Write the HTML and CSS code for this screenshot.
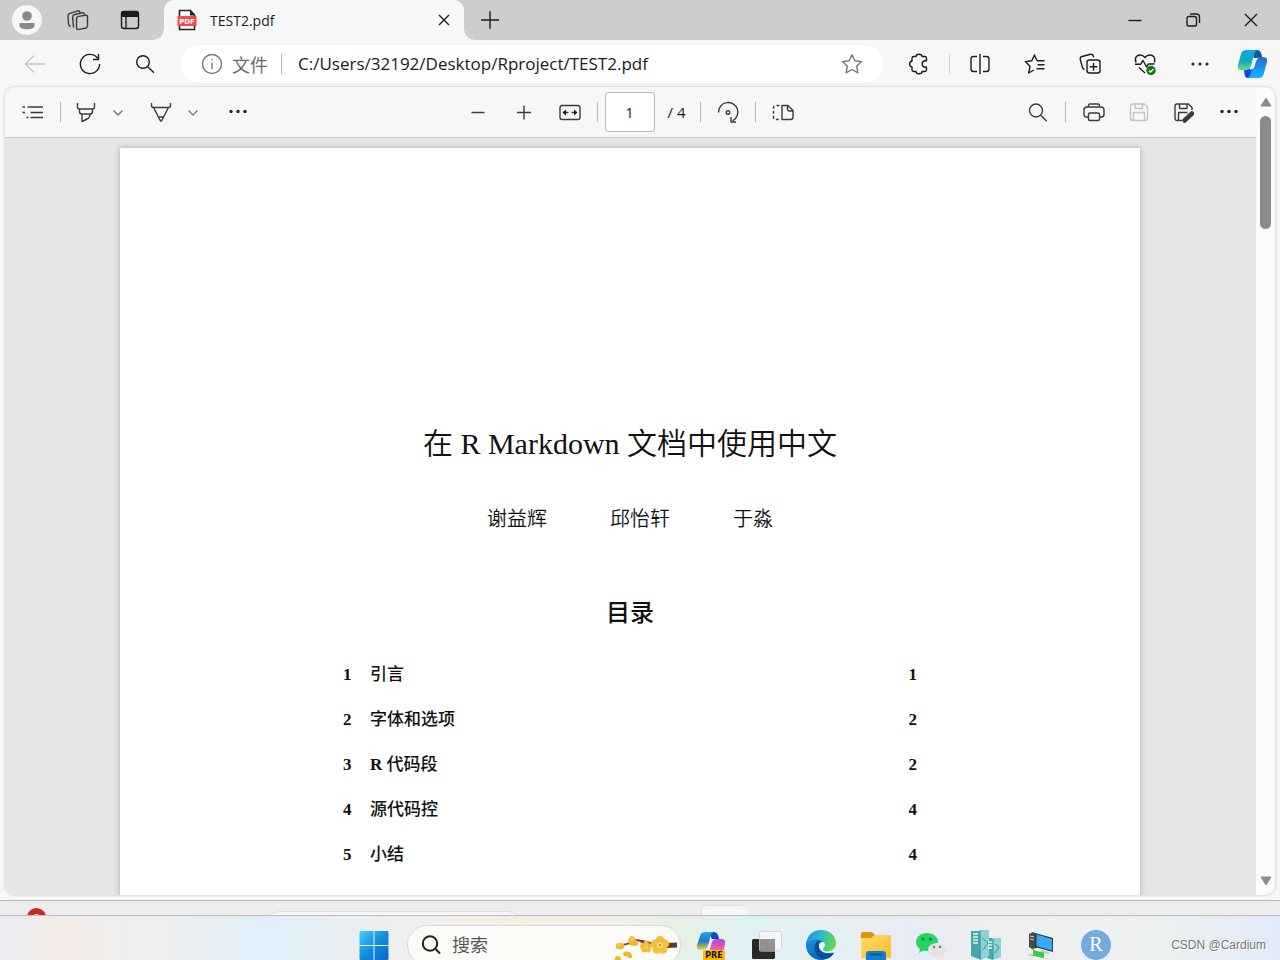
FILE: index.html
```html
<!DOCTYPE html>
<html lang="zh-CN">
<head>
<meta charset="utf-8">
<meta name="viewport" content="width=device-width, initial-scale=1">
<title>TEST2.pdf</title>
<link rel="stylesheet" href="styles.css">
</head>
<body>
<div class="browser">
  <header class="tabbar">
    <button class="avatar" aria-label="个人资料"><svg viewBox="0 0 30 30"><circle cx="15" cy="15" r="15" fill="#f7f7f7"/><circle cx="15" cy="11" r="4.8" fill="#898989"/><path d="M7.5 18h15v2.200c0 2.600-3.200 4-7.500 4s-7.500-1.400-7.500-4z" fill="#898989"/></svg></button>
    <button class="btn tab-tool" aria-label="工作区"><svg class="ico" viewBox="0 0 24 24"><rect x="10.500" y="8" width="11" height="13" rx="2.200" transform="skewY(-10) translate(0 2.600)"/><path d="M7.500 19.500 6.600 9.400q0-2.400 2-2.900l7.600-1.700q2-.3 2.300 1.700M4.500 18.500Q2.600 17.600 2.400 15L2 8.200q0-2.400 2-2.900l7.600-2.500q2-.3 2.300 1.700M2.400 15q.2 2.200 1.600 2.800"/></svg></button>
    <button class="btn tab-tool" aria-label="标签操作"><svg class="ico dark" viewBox="0 0 24 24"><rect x="3.500" y="3.500" width="17" height="17" rx="2.500"/><path class="solid" d="M3 9V5.500Q3 3 5.500 3h13Q21 3 21 5.500V9z"/><path d="M8 9v11"/></svg></button>
    <div class="tab">
      <svg class="pdf" viewBox="0 0 20 22"><path d="M2.500 1.500h11l4 4.500v14.500h-15z" fill="#fff" stroke="#222" stroke-width="1.600"/><path d="M13 1v5.500h5z" fill="#222"/><rect x=".5" y="7" width="19" height="10" fill="#f9444a"/><text x="10" y="14.600">PDF</text></svg>
      <span class="tab-title">TEST2.pdf</span>
      <button class="btn tab-close" aria-label="关闭标签页"><svg class="ico dark" viewBox="0 0 24 24"><path d="m7 7 10 10M17 7 7 17"/></svg></button>
    </div>
    <button class="btn new-tab" aria-label="新建标签页"><svg class="ico dark" viewBox="0 0 24 24"><path d="M12 3v18M3 12h18"/></svg></button>
    <div class="window-controls">
      <button class="btn" aria-label="最小化"><svg class="ico dark" viewBox="0 0 24 24"><path d="M5.500 12.500h13"/></svg></button>
      <button class="btn" aria-label="还原"><svg class="ico dark" viewBox="0 0 24 24"><rect x="6" y="8.500" width="9.500" height="9.500" rx="1.800"/><path d="M9 6h6.500q3 0 3 3v6"/></svg></button>
      <button class="btn" aria-label="关闭"><svg class="ico dark" viewBox="0 0 24 24"><path d="m6 6 12 12M18 6 6 18"/></svg></button>
    </div>
  </header>

  <nav class="navbar">
    <button class="btn" aria-label="后退" disabled><svg class="ico faint" viewBox="0 0 24 24"><path d="M22 12H2.500M11 3.500 2.500 12l8.500 8.500"/></svg></button>
    <button class="btn" aria-label="刷新"><svg class="ico dark" viewBox="0 0 24 24"><path d="M19.500 6a9.600 9.600 0 1 0 2.100 6M20.500 2v5.500H15"/></svg></button>
    <button class="btn" aria-label="搜索"><svg class="ico dark" viewBox="0 0 24 24"><circle cx="10" cy="10" r="6.300"/><path d="m14.700 14.700 6.300 6"/></svg></button>
    <div class="address">
      <svg class="ico gray" viewBox="0 0 24 24"><circle cx="12" cy="12" r="9.500"/><path d="M12 10.500v6.500M12 7v1.600"/></svg>
      <label class="scheme" for="url">文件</label>
      <span class="divider"></span>
      <input class="url" id="url" type="text" value="C:/Users/32192/Desktop/Rproject/TEST2.pdf">
      <button class="btn star" aria-label="收藏"><svg class="ico gray" viewBox="0 0 24 24"><path d="m12 2.800 2.800 6 6.700.8-4.900 4.600 1.300 6.600L12 17.500l-5.900 3.300 1.300-6.600-4.900-4.600 6.700-.8z"/></svg></button>
    </div>
    <div class="nav-tools">
      <button class="btn" aria-label="扩展"><svg class="ico dark" viewBox="0 0 24 24"><path d="M9 4.500q0-2.300 3-2.300t3 2.300h2.800q1.700 0 1.700 1.700v2.600h-1.700q-2.600.3-2.600 3.200t2.600 3.200h1.700v2.600q0 1.700-1.700 1.700H15q0 2.300-3 2.300t-3-2.300H6.700Q5 19.500 5 17.800V15q-2.300-.2-2.300-3T5 9V6.200q0-1.700 1.700-1.700z"/></svg></button>
      <span class="divider light"></span>
      <button class="btn" aria-label="分屏"><svg class="ico dark" viewBox="0 0 24 24"><path d="M9 4.500H5.500Q3 4.500 3 7v10q0 2.500 2.500 2.500H9M15 4.500h3.500Q21 4.500 21 7v10q0 2.500-2.500 2.500H15M12 2v20"/></svg></button>
      <button class="btn" aria-label="收藏夹"><svg class="ico dark" viewBox="0 0 24 24"><path d="M14 8.700 11.500 3 8.800 8.700l-6.500.9L7 14.200 5.700 21l5.300-3M14 8.700h7.500M14.500 12.700h7M13.500 16.700h8"/></svg></button>
      <button class="btn" aria-label="集锦"><svg class="ico dark" viewBox="0 0 24 24"><rect x="9" y="8" width="13" height="13" rx="2.500"/><path d="M15.500 11v7.500M11.800 14.700h7.500M6.500 17.500q-1.700-.5-2.100-2.200L2.300 7.500q-.5-2.300 1.700-3l8.500-2.200q2.200-.4 2.800 1.700l.3 1.400"/></svg></button>
      <button class="btn" aria-label="浏览器概要"><svg class="ico dark" viewBox="0 0 24 24"><path d="M3 10.500C1 5.500 4 3 7 3q3 0 5 2.500Q14 3 17 3c3 0 6 2.500 4.500 7.500M2 12.300h5.500L10 8.500l3.500 6.500 2-3h6M6 15.500l6 5.500"/><circle cx="18" cy="18.500" r="4.700" fill="#107c10" stroke="none"/><path stroke="#fff" d="m16 18.500 1.500 1.500 3-3"/></svg></button>
      <button class="btn" aria-label="设置及其他"><svg class="ico dots" viewBox="0 0 24 24"><circle cx="5" cy="12" r="1.600"/><circle cx="12" cy="12" r="1.600"/><circle cx="19" cy="12" r="1.600"/></svg></button>
      <button class="btn copilot" aria-label="Copilot"><svg viewBox="0 0 30 30">
        <defs>
          <linearGradient id="cpA" x1="0" y1="0" x2="0" y2="1"><stop offset="0" stop-color="#08a9e8"/><stop offset=".55" stop-color="#14a7bd"/><stop offset="1" stop-color="#62dd91"/></linearGradient>
          <linearGradient id="cpB" x1="0" y1="0" x2="0" y2="1"><stop offset="0" stop-color="#2468d4"/><stop offset="1" stop-color="#16b5ff"/></linearGradient>
        </defs>
        <path d="M14 1h6q3 0 4 3l1.500 5H17z" fill="#0b5b91"/><path d="M7 20h9l-3 9h-2q-3 0-3.500-4z" fill="#1647d5"/>
        <path d="M9 1h11q-2 1-3 5l-3 11q-1 4-5 4H4q-4 0-3-5L4 5q1-4 5-4z" fill="url(#cpA)"/><path d="M21 8h5q5 0 4 5l-3 11q-1 5-5 5H10q3-1 4-5l3-12q1-4 4-4z" fill="url(#cpB)"/><path d="M17 9h4q-2 2-3 7-1 4-5 5 1-1 2-6 1-5 2-6z" fill="#fff"/></svg></button>
    </div>
  </nav>

  <main class="viewer">
    <div class="viewer-body">
      <div class="toolbar">
        <div class="tools tools-left">
          <button class="btn" aria-label="目录"><svg class="ico" viewBox="0 0 24 24"><path d="M6.500 7H22M9.500 12.500H22M9.500 17.500H22M1.500 7h2.500M1.500 12.500H4M5.500 17.500h2"/></svg></button>
          <span class="divider"></span>
          <button class="btn" aria-label="突出显示"><svg class="ico" viewBox="0 0 24 24"><path d="M3.500 3v4q0 2 2 2h13q2 0 2-2V3M5.500 9v2.500q0 2.500 2.500 2.500h8q2.500 0 2.500-2.500V9M8 14v7.500l6-3q2-1 2-4.500M5 9h14"/></svg></button>
          <button class="btn chevron" aria-label="突出显示选项"><svg class="ico gray" viewBox="0 0 24 24"><path d="m7.500 10.500 4.500 4.500 4.500-4.500"/></svg></button>
          <button class="btn pen" aria-label="绘制"><svg class="ico" viewBox="0 0 24 24"><path d="M2.500 3v2.500q0 2 2 2h15q2 0 2-2V3M4.500 7.500 11 20q1 2 2 0l6.500-12.500M9.500 17h5l-2 4h-1z"/></svg></button>
          <button class="btn chevron" aria-label="绘制选项"><svg class="ico gray" viewBox="0 0 24 24"><path d="m7.500 10.500 4.500 4.500 4.500-4.500"/></svg></button>
          <button class="btn more" aria-label="更多工具"><svg class="ico dots" viewBox="0 0 24 24"><circle cx="5" cy="11.500" r="1.700"/><circle cx="12" cy="11.500" r="1.700"/><circle cx="19" cy="11.500" r="1.700"/></svg></button>
        </div>
        <div class="tools tools-center">
          <button class="btn" aria-label="缩小"><svg class="ico" viewBox="0 0 24 24"><path d="M5.500 12.500h13"/></svg></button>
          <button class="btn" aria-label="放大"><svg class="ico" viewBox="0 0 24 24"><path d="M12 5.500v14M5 12.500h14"/></svg></button>
          <button class="btn" aria-label="适应宽度"><svg class="ico" viewBox="0 0 24 24"><rect x="2" y="5.500" width="20" height="14" rx="2.200"/><path d="M5.500 12.500h5M13.500 12.500h5"/><path class="solid" d="m8 9.500-3.500 3 3.500 3zM16 9.500l3.500 3-3.500 3z"/></svg></button>
          <span class="divider"></span>
          <label class="pager"><input class="page-number" type="text" value="1" aria-label="页码"><span>/ 4</span></label>
          <span class="divider"></span>
          <button class="btn" aria-label="旋转"><svg class="ico" viewBox="0 0 24 24"><path d="M2.500 12.500a9.700 9.700 0 1 1 14.200 8.300M15 17v5h5"/><circle cx="12" cy="12.500" r="1.800"/></svg></button>
          <span class="divider"></span>
          <button class="btn" aria-label="页面视图"><svg class="ico" viewBox="0 0 24 24"><path d="M11 5.500h6l5 5V17q0 2.500-2.500 2.500H11zM16.500 5.500V9q0 2 2 2H22"/><path stroke-dasharray="3 2" d="M8.500 5.500h-4Q2.500 5.500 2.500 7.500v10q0 2 2 2h4"/></svg></button>
        </div>
        <div class="tools tools-right">
          <button class="btn" aria-label="查找"><svg class="ico" viewBox="0 0 24 24"><circle cx="10" cy="10.500" r="6.500"/><path d="m14.700 15.200 6 6"/></svg></button>
          <span class="divider"></span>
          <button class="btn" aria-label="打印"><svg class="ico" viewBox="0 0 24 24"><path d="M6.500 7V5.500q0-1.500 1.500-1.500h8q1.500 0 1.500 1.500V7M6.500 17H4.500Q2 17 2 14.500V10q0-3 3-3h14q3 0 3 3v4.500q0 2.500-2.500 2.500h-2"/><rect x="6.500" y="13" width="11" height="7.500" rx="1.500"/></svg></button>
          <button class="btn" aria-label="保存" disabled><svg class="ico faint" viewBox="0 0 24 24"><path d="M5.500 4h12l3 3v11q0 2.500-2.500 2.500H6Q3.500 20.500 3.500 18V6q0-2 2-2zM8 4v4.500h7.500V4M6.500 20.500v-8h11v8"/></svg></button>
          <button class="btn" aria-label="另存为"><svg class="ico" viewBox="0 0 24 24"><path d="M10 20.500H5.500q-2.500 0-2.500-2.500V6q0-2 2-2h11.500L20 7.500V10M7.500 4v4.500H15V4M6.500 20v-7.500h9"/><path d="m12.500 20.500 7.500-7" stroke-width="4.500" stroke-linecap="round"/></svg></button>
          <button class="btn" aria-label="更多"><svg class="ico dots" viewBox="0 0 24 24"><circle cx="5" cy="11.500" r="1.700"/><circle cx="12" cy="11.500" r="1.700"/><circle cx="19" cy="11.500" r="1.700"/></svg></button>
        </div>
      </div>
      <div class="canvas">
        <article class="page">
          <h1>在 R Markdown 文档中使用中文</h1>
          <div class="authors"><span>谢益辉</span><span>邱怡轩</span><span>于淼</span></div>
          <h2>目录</h2>
          <ol class="toc">
            <li><span>1</span><span class="entry">引言</span><span>1</span></li>
            <li><span>2</span><span class="entry">字体和选项</span><span>2</span></li>
            <li><span>3</span><span class="entry"><b>R</b> 代码段</span><span>2</span></li>
            <li><span>4</span><span class="entry">源代码控</span><span>4</span></li>
            <li><span>5</span><span class="entry">小结</span><span>4</span></li>
          </ol>
        </article>
      </div>
    </div>
    <div class="scrollbar">
      <svg viewBox="0 0 12 10"><path d="M6 1 11 9H1z"/></svg>
      <div class="thumb"></div>
      <svg viewBox="0 0 12 10"><path d="M1 1h10L6 9z"/></svg>
    </div>
  </main>
</div>

<div class="behind">
  <span class="alert"></span>
  <span class="behind-pill"></span>
  <span class="behind-tile"></span>
</div>

<footer class="taskbar">
  <div class="task-row">
    <button class="task" aria-label="开始"><svg viewBox="0 0 30 30"><defs><linearGradient id="win" gradientUnits="userSpaceOnUse" x1="0" y1="0" x2="30" y2="30"><stop offset="0" stop-color="#4fd0fb"/><stop offset=".5" stop-color="#138fdf"/><stop offset="1" stop-color="#0268ca"/></linearGradient></defs><path fill="url(#win)" d="M1.500 1H14.500V15H.5V2zM15.500 1h13l1 1v13h-14zM.5 16h14v14h-13l-1-1zM15.500 16h14v13l-1 1h-13z"/></svg></button>
    <label class="search">
      <svg class="ico" viewBox="0 0 24 24"><circle cx="11" cy="10.500" r="7.200"/><path d="m16.500 16 4.500 4.500"/></svg>
      <input type="text" placeholder="搜索" aria-label="搜索">
      <svg class="blossom" viewBox="0 0 64 30">
        <defs><g id="flower"><circle cx="0" cy="-4" r="3.400"/><circle cx="3.900" cy="-1" r="3.400"/><circle cx="2.500" cy="3.500" r="3.400"/><circle cx="-2.500" cy="3.500" r="3.400"/><circle cx="-3.900" cy="-1" r="3.400"/><circle r="2" fill="#fff0a0"/><circle r=".9" fill="#a87112"/></g></defs>
        <path d="M6 15q9 0 13-5 9 0 17 3l24 3M24 10l12 6" fill="none" stroke="#704238" stroke-width="2"/><path d="M53 15.500 63 15" stroke="#5b3933" stroke-width="5"/>
        <g fill="#f1b62e"><ellipse cx="6" cy="16" rx="4.200" ry="3.300"/><ellipse cx="18" cy="11" rx="3.600" ry="5"/><circle cx="21" cy="13" r="3"/><ellipse cx="13" cy="24" rx="4" ry="2.500"/><circle cx="16" cy="26" r="2.200"/><circle cx="4" cy="29" r="3"/></g>
        <g fill="#fbd35f"><circle cx="5" cy="15" r="1.600"/><circle cx="18" cy="9" r="1.800"/></g>
        <use href="#flower" fill="#f4bd38" transform="translate(32 17) scale(.8)"/><use href="#flower" transform="translate(46 15) scale(1.250)" fill="#f6bf3d"/></svg>
    </label>
    <button class="task" aria-label="Copilot 预览版"><svg viewBox="0 0 30 30"><defs><linearGradient id="pcA" x1="0" y1="0" x2="0" y2="1"><stop stop-color="#16aef0"/><stop offset=".5" stop-color="#2374cd"/><stop offset="1" stop-color="#eed82d"/></linearGradient><linearGradient id="pcB" x1="0" y1="0" x2="0" y2="1"><stop stop-color="#a14ce7"/><stop offset=".7" stop-color="#ee5d99"/><stop offset="1" stop-color="#f79c55"/></linearGradient></defs><path d="M12 2h6q4 0 5 7h-7z" fill="#1845c0"/><path d="M9 2h9q-3 1-4 6-2 12-7 12H4q-4 0-3-5L4 6q1-4 5-4z" fill="url(#pcA)"/><path d="M20 9h5q5 0 4 5l-2 9H11q3-2 4-7 1-7 5-7z" fill="url(#pcB)"/><rect x="7" y="20" width="22" height="11" rx="2" fill="#fdb900"/><text class="pre" x="18" y="28">PRE</text></svg></button>
    <button class="task" aria-label="任务视图"><svg viewBox="0 0 30 30"><rect x="1" y="9" width="23" height="20" rx="1.500" fill="#292929"/><rect x="8.500" y="1.500" width="22" height="19.500" rx="1.500" fill="#f5f5f5" stroke="#d7d7d7"/><path d="M8.500 9H24v12H8.500z" fill="#929292"/></svg></button>
    <button class="task" aria-label="Microsoft Edge"><svg viewBox="0 0 30 30"><defs><linearGradient id="edA" x1="0" y1="0" x2="1" y2=".35"><stop stop-color="#178ed9"/><stop offset=".5" stop-color="#2bb9d8"/><stop offset="1" stop-color="#60d94e"/></linearGradient><linearGradient id="edB" x1="0" y1="0" x2=".5" y2="1"><stop stop-color="#1697e3"/><stop offset="1" stop-color="#0866be"/></linearGradient></defs><path d="M0 15C0 7 6 3 13 5l5 8-2 8 12 2c-3 5-8 7-13 7C6 30 0 23 0 15z" fill="url(#edB)"/><path d="M.5 13C1.500 5 7 0 15 0c9 0 15 6 15 13 0 6-5 8.500-9 8.500-4 0-5-1.500-4-3 3-5-1-9-6-9-5 0-8.500 2-10.500 3.500z" fill="url(#edA)"/><path d="M11.500 11C6 16 8 27 17 28.500c5 .5 9-2 11-6-6 3-15 1-15-6 0-2 1-4 2.500-5z" fill="#0c4f98"/><path d="M13 16c-1-4 6-6 6-1 0 2-2 3-2 4 0 2 2 2.500 5 2.500s5-1 6-2q1-1 .5 1l-1 1.500C20 25 13 21.500 13 16z" fill="#edf5f4"/></svg></button>
    <button class="task" aria-label="文件资源管理器"><svg viewBox="0 0 30 30"><defs><linearGradient id="fold" x1="0" y1="0" x2="1" y2="1"><stop stop-color="#ffdd68"/><stop offset="1" stop-color="#ffb92d"/></linearGradient></defs><path d="M0 4q0-2 2-2h8q1 0 2 1l2 2h15v5H0z" fill="#d99709"/><path d="M0 8h10l4-3h15q1 0 1 1v22H0z" fill="url(#fold)"/><path d="M5 30v-6q0-3 3-3h14q3 0 3 3v6z" fill="#157cce"/><path d="M9 24.500h12" stroke="#084b89" stroke-width="1.500"/></svg></button>
    <button class="task" aria-label="微信"><svg viewBox="0 0 30 30"><path d="M11 3c-6.500 0-11 4-11 9 0 3 1.500 5.500 4 7l-1 4 4.500-2.500L11 21c6.500 0 11-4 11-9s-5-9-11-9z" fill="#25d366"/><circle cx="7" cy="9" r="1.500" fill="#087d39"/><circle cx="14.500" cy="9" r="1.500" fill="#087d39"/><path d="M21 13c-5 0-9 3-9 7s4 7 9 7l3-.5 4 2-1-3.500c2-1 3-3 3-5 0-4-4-7-9-7z" fill="#e3e3e3"/><circle cx="18" cy="17" r="1.200" fill="#777"/><circle cx="24" cy="17" r="1.200" fill="#777"/></svg></button>
    <button class="task" aria-label="服务器"><svg viewBox="0 0 30 30"><path d="M0 1h10v29l-10-4zM15 8h7v22l-6-2z" fill="#4aa6ad"/><path d="M9 0h9v26l-8 4zM21 8h9v19l-8 3z" fill="#8dd3d4"/><path d="M2 4h5m-5 3h5m-5 3h5m-5 3h5M17 12h4m-4 3h4m-4 3h4" stroke="#d5fafa" stroke-width="1.300"/><path d="M9 0v29M22 9v20M11 8l6 5-5 7M24 14l4 3-4 6" fill="none" stroke="#3a939b"/></svg></button>
    <button class="task" aria-label="远程连接"><svg viewBox="0 0 30 30"><path d="m3 4 4-2 4 2v14l-5 1-3-2z" fill="#464b4f"/><path d="m4 6 4 1M4 9l4 1" stroke="#d6d6d6"/><path d="m9 3 18 5v14L9 17z" fill="#323b43"/><path d="m10.500 4.500 15.500 4.500v11.500l-15.500-4.500z" fill="#35aaf8"/><path d="m15 20 9 2-3 3-8-2z" fill="#c2c7c9"/><path d="m2 21 5-2 3 2 9 2 4 2v4l-6-1-9-2-5-1z" fill="#3acc39"/><path d="m2 19 5 1v5l-5-1zM18 23l5 1v5l-5-1z" fill="#edf2ed"/></svg></button>
    <button class="task" aria-label="RStudio"><svg viewBox="0 0 30 30"><circle cx="15" cy="15" r="15" fill="#75aadb"/><text class="rlogo" x="15" y="21">R</text></svg></button>
  </div>
  <span class="watermark">CSDN @Cardium</span>
</footer>
</body>
</html>
```
FILE: styles.css
```css
* { box-sizing: border-box; }

body {
  margin: 0;
  height: 100vh;
  display: flex;
  flex-direction: column;
  overflow: hidden;
  background: #ededed;
  color: #1b1b1b;
  font-family: "Noto Sans", "Noto Sans CJK SC", sans-serif;
}

button, input {
  margin: 0;
  padding: 0;
  border: 0;
  background: none;
  color: inherit;
  font: inherit;
}

svg { display: block; flex: none; }

.browser {
  flex: 1;
  min-height: 0;
  display: flex;
  flex-direction: column;
  padding-bottom: 5px;
  background: #f7f7f7;
}

.btn {
  width: 40px;
  height: 36px;
  flex: none;
  display: flex;
  align-items: center;
  justify-content: center;
}

.ico {
  width: 24px;
  height: 24px;
  fill: none;
  stroke: #3b3b3b;
  stroke-width: 1.4;
  stroke-linejoin: round;
}
.ico.dark { stroke: #1d1d1d; }
.ico.gray { stroke: #767676; }
.ico.faint { stroke: #c4c4c4; }
.ico.dots { fill: #2b2b2b; stroke: none; }
.ico .solid { fill: currentColor; stroke: none; }

.divider {
  width: 1px;
  height: 20px;
  flex: none;
  background: #b5b5b5;
}
.divider.light { background: #d2d2d2; }

/* Tab strip */
.tabbar {
  height: 40px;
  flex: none;
  display: flex;
  align-items: center;
  padding-left: 12px;
  background: #cdcdcd;
}
.avatar { width: 30px; height: 30px; margin-right: 10px; }
.tab-tool { width: 52px; }
.tab {
  position: relative;
  width: 300px;
  height: 40px;
  margin-left: 8px;
  display: flex;
  align-items: center;
  padding-left: 13px;
  border-radius: 10px 10px 0 0;
  background: #f7f7f7;
}
.tab::before, .tab::after {
  content: "";
  position: absolute;
  bottom: 0;
  width: 10px;
  height: 10px;
}
.tab::before { left: -10px; background: radial-gradient(circle at 0 0, #cdcdcd 9px, #f7f7f7 10px); }
.tab::after { right: -10px; background: radial-gradient(circle at 100% 0, #cdcdcd 9px, #f7f7f7 10px); }
.pdf { width: 20px; height: 22px; margin-right: 13px; }
.pdf text { font: bold 7px "DejaVu Sans", sans-serif; fill: #fff; text-anchor: middle; }
.tab-title { flex: 1; font: 14px "Open Sans", sans-serif; }
.new-tab { margin-left: 6px; }
.window-controls { display: flex; margin-left: auto; }
.window-controls .btn { width: 58px; height: 40px; }

/* Navigation row */
.navbar {
  height: 47px;
  flex: none;
  display: flex;
  align-items: center;
  padding: 0 3px 0 7px;
}
.navbar > .btn { width: 55px; }
.address {
  flex: 1;
  height: 38px;
  display: flex;
  align-items: center;
  margin-left: 8px;
  padding: 0 12px 0 20px;
  border-radius: 19px;
  background: #fff;
  box-shadow: 0 0 3px #e6e6e6;
}
.scheme { margin: 0 13px 0 8px; font-size: 18px; color: #6c6c6c; }
.url { flex: 1; min-width: 0; margin-left: 16px; font: 17px "Open Sans", sans-serif; }
.nav-tools { display: flex; align-items: center; margin-left: 15px; }
.nav-tools .btn { width: 55px; }
.nav-tools .btn:first-child { width: 40px; }
.nav-tools .divider { margin: 0 2px 0 10px; }
.nav-tools .copilot { width: 50px; }
.copilot svg { width: 30px; height: 30px; }

/* PDF viewer */
.viewer {
  flex: 1;
  min-height: 0;
  display: flex;
  margin: 0 5px;
  border-radius: 10px;
  overflow: hidden;
  background: #fcfcfc;
  box-shadow: 0 0 3px #bdbdbd;
}
.viewer-body {
  flex: 1;
  min-width: 0;
  display: flex;
  flex-direction: column;
}
.toolbar {
  height: 51px;
  flex: none;
  display: grid;
  grid-template-columns: 1fr auto 1fr;
  align-items: center;
  border-bottom: 1px solid #c6c6c6;
  background: #f7f7f7;
}
.tools { display: flex; align-items: center; }
.tools-left { padding-left: 8px; }
.tools-left .divider { margin: 0 5px 0 7px; }
.tools-left .chevron { width: 24px; }
.pen { margin-left: 11px; }
.more { margin-left: 13px; }
.tools-center { gap: 6px; }
.tools-center .divider { margin: 0 1px; }
.pager { display: flex; align-items: center; gap: 13px; padding-right: 8px; font-size: 15px; }
.page-number {
  width: 50px;
  height: 40px;
  border: 1px solid #bcbcbc;
  border-radius: 3px;
  background: #fff;
  text-align: center;
}
.pager, .page-number { font-family: "Open Sans", sans-serif; }
.tools-right { justify-content: flex-end; gap: 5px; padding-right: 7px; }
.tools-right .divider { margin: 0 3px 0 2px; }

.canvas {
  flex: 1;
  min-height: 0;
  padding: 10px 16px 0 15px;
  overflow: hidden;
  background: #e6e6e6;
}
.page {
  max-width: 1020px;
  min-height: 100%;
  margin: 0 auto;
  padding: 271px 24px 20px;
  background: #fff;
  box-shadow: 0 0 6px #aaa;
  color: #111;
  font-family: "Liberation Serif", "Noto Sans CJK SC", serif;
  text-align: center;
}
.page h1 { margin: 0; font-size: 30px; font-weight: 350; line-height: 50px; }
.authors {
  display: flex;
  justify-content: center;
  gap: 63px;
  margin-top: 34px;
  font-size: 20px;
  font-weight: 350;
  line-height: 32px;
}
.page h2 { margin: 60px 0 0; font-size: 24px; font-weight: 500; line-height: 36px; }
.toc {
  max-width: 574px;
  margin: 21px auto 0;
  padding: 0;
  list-style: none;
  font-size: 17px;
  font-weight: 700;
  line-height: 45px;
  text-align: left;
}
.toc li { display: flex; height: 45px; }
.toc span:first-child { width: 27px; }
.toc span:last-child { margin-left: auto; }
.toc .entry { font-weight: 500; }

.scrollbar {
  width: 19px;
  flex: none;
  display: flex;
  flex-direction: column;
  align-items: center;
  padding: 10px 0 9px;
}
.scrollbar svg { width: 12px; height: 10px; fill: #8b8b8b; stroke: #8b8b8b; stroke-linejoin: round; }
.thumb { width: 11px; height: 113px; margin: 9px 0 auto; border-radius: 6px; background: #8b8b8b; }

/* Window showing beneath the browser */
.behind {
  height: 15px;
  flex: none;
  display: flex;
  align-items: flex-start;
  padding-left: 27px;
  border-top: 1px solid #b9b9b9;
  overflow: hidden;
  background: #ededed;
}
.alert { width: 19px; height: 19px; flex: none; margin-top: 7px; border-radius: 50%; background: radial-gradient(circle, #f6dad5 3px, #c92a1f 4px); }
.behind-pill { width: 258px; height: 30px; margin: 10px 0 0 219px; border: 1px solid #ddd; border-radius: 15px; background: #f7f7f7; }
.behind-tile { width: 44px; height: 20px; margin: 5px 0 0 179px; border-radius: 4px; background: #f7f7f7; box-shadow: 4px 0 0 -1px #f3f3f3, 0 0 2px #ccc; }

/* Taskbar */
.taskbar {
  position: relative;
  height: 45px;
  flex: none;
  padding-left: 346px;
  border-top: 1px solid #b9bcc0;
  overflow: hidden;
  background: linear-gradient(90deg, #e9edf4 0, #f4ebe7 4%, #efefee 11%, #e9eef2 16%, #dfeffa 21%, #e9eef2 27%, #f0efed 33%, #f5ede1 40%, #f1efe9 48%, #e7f0e4 53%, #def1f3 58%, #e8eff4 66%, #e8ebf5 71%, #efefef 78%, #edf0f1 91%, #e1eafa 100%);
}
.task-row { height: 58px; display: flex; align-items: center; }
.task {
  width: 55px;
  height: 45px;
  flex: none;
  display: flex;
  align-items: center;
  justify-content: center;
}
.task svg { width: 30px; height: 30px; overflow: visible; }
.pre { font: bold 8px "DejaVu Sans", sans-serif; fill: #171717; text-anchor: middle; }
.rlogo { font: 20px "Liberation Serif", serif; fill: #fff; text-anchor: middle; }
.search {
  width: 274px;
  height: 40px;
  flex: none;
  display: flex;
  align-items: center;
  margin: 0 2px 0 6px;
  padding: 0 2px 0 11px;
  border: 1px solid #d8d8d6;
  border-radius: 20px;
  background: #fbfbf8;
}
.search .ico { stroke: #202020; stroke-width: 2; }
.search input { flex: 1; min-width: 0; margin-left: 9px; font-size: 18px; }
.search input::placeholder { color: #585858; opacity: 1; }
.blossom { width: 64px; height: 30px; }
.watermark {
  position: absolute;
  right: 14px;
  top: 20px;
  color: #777;
  font: 12px/18px "Liberation Sans", sans-serif;
  text-shadow: 1px 1px 0 #fff;
}
```
